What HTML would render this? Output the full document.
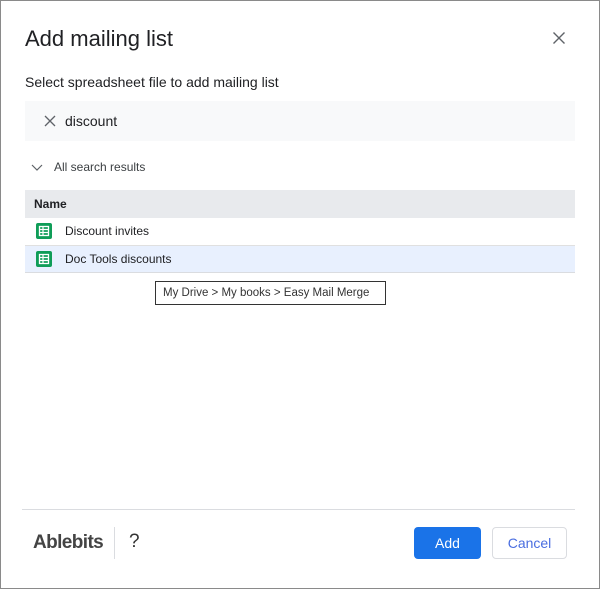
<!DOCTYPE html>
<html><head><style>
*{margin:0;padding:0;box-sizing:border-box}
body{width:600px;height:589px;background:#fff;font-family:"Liberation Sans",Arial,sans-serif;position:relative;overflow:hidden}
.frame{position:absolute;left:0;top:0;width:600px;height:589px;border:1px solid #8a8a8a}
.a{position:absolute}
</style></head><body>
<div class="frame"></div>
<div class="a" style="left:25px;top:26px;font-size:22px;color:#202124">Add mailing list</div>
<svg class="a" style="left:553px;top:32px" width="12" height="12" viewBox="0 0 12 12"><path d="M0.5 0.5L11.5 11.5M11.5 0.5L0.5 11.5" stroke="#5f6368" stroke-width="1.4"/></svg>
<div class="a" style="left:25px;top:74px;font-size:14px;color:#202124">Select spreadsheet file to add mailing list</div>
<div class="a" style="left:25px;top:101px;width:550px;height:40px;background:#f8f9fa"></div>
<svg class="a" style="left:44px;top:115px" width="12" height="12" viewBox="0 0 12 12"><path d="M1 1L11 11M11 1L1 11" stroke="#5f6368" stroke-width="1.3"/></svg>
<div class="a" style="left:65px;top:113px;font-size:14px;color:#202124">discount</div>
<svg class="a" style="left:31px;top:164px" width="12" height="8" viewBox="0 0 12 8"><path d="M1 1L6 6L11 1" stroke="#5f6368" stroke-width="1.2" fill="none"/></svg>
<div class="a" style="left:54px;top:160px;font-size:12px;color:#3c4043">All search results</div>
<div class="a" style="left:25px;top:190px;width:550px;height:28px;background:#e8eaed"></div>
<div class="a" style="left:34px;top:197px;font-size:12px;font-weight:bold;color:#202124">Name</div>
<div class="a" style="left:25px;top:245px;width:550px;height:1px;background:#e0e0e0"></div>
<div class="a" style="left:25px;top:246px;width:550px;height:27px;background:#e8f0fe;border-bottom:1px solid #dadce0"></div>
<svg class="a" style="left:36px;top:223px" width="16" height="16" viewBox="0 0 16 16"><rect width="16" height="16" rx="2" fill="#0f9d58"/><rect x="3.5" y="3.5" width="9" height="9" fill="none" stroke="#fff" stroke-width="1.3"/><path d="M3.5 6.5H12.5M3.5 9.5H12.5M7 3.5V12.5" stroke="#fff" stroke-width="1.2"/></svg>
<svg class="a" style="left:36px;top:251px" width="16" height="16" viewBox="0 0 16 16"><rect width="16" height="16" rx="2" fill="#0f9d58"/><rect x="3.5" y="3.5" width="9" height="9" fill="none" stroke="#fff" stroke-width="1.3"/><path d="M3.5 6.5H12.5M3.5 9.5H12.5M7 3.5V12.5" stroke="#fff" stroke-width="1.2"/></svg>
<div class="a" style="left:65px;top:224px;font-size:12px;color:#202124">Discount invites</div>
<div class="a" style="left:65px;top:252px;font-size:12px;color:#202124">Doc Tools discounts</div>
<div class="a" style="left:155px;top:281px;width:231px;height:24px;border:1px solid #333;background:#fff;font-size:11.5px;color:#333;padding:5px 0 0 7px;white-space:nowrap">My Drive &gt; My books &gt; Easy Mail Merge</div>
<div class="a" style="left:22px;top:509px;width:553px;height:1px;background:#dadce0"></div>
<div class="a" style="left:33px;top:532px;font-size:19px;font-weight:600;color:#444;letter-spacing:-0.6px">Ablebits</div>
<div class="a" style="left:114px;top:527px;width:1px;height:32px;background:#dadce0"></div>
<div class="a" style="left:129px;top:531px;font-size:19px;color:#333">?</div>
<div class="a" style="left:414px;top:527px;width:67px;height:32px;background:#1a73e8;border-radius:4px;color:#fff;font-size:14px;text-align:center;line-height:32px">Add</div>
<div class="a" style="left:492px;top:527px;width:75px;height:32px;border:1px solid #dadce0;border-radius:4px;color:#4a6ee0;font-size:14px;text-align:center;line-height:30px">Cancel</div>
</body></html>
